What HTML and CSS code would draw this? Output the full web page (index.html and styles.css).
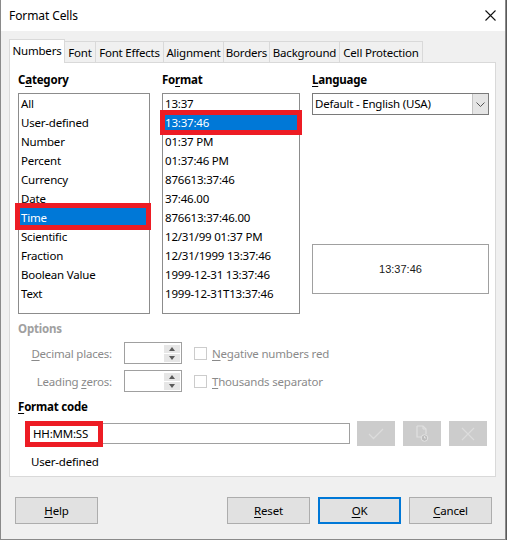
FILE: index.html
```html
<!DOCTYPE html>
<html>
<head>
<meta charset="utf-8">
<title>Format Cells</title>
<link rel="stylesheet" href="styles.css">
</head>
<body>
<div class="window">
  <div class="titlebar">
    <span class="title">Format Cells</span>
    <svg class="close" width="11" height="11" viewBox="0 0 11 11"><path d="M0.5 0.5 L10.5 10.5 M10.5 0.5 L0.5 10.5" stroke="#111" stroke-width="1.1" fill="none"/></svg>
  </div>

  <div class="tabs">
    <div class="tab active w-numbers">Numbers</div>
    <div class="tab w-font">Font</div>
    <div class="tab w-effects">Font Effects</div>
    <div class="tab w-align">Alignment</div>
    <div class="tab w-borders">Borders</div>
    <div class="tab w-bg">Background</div>
    <div class="tab w-protect">Cell Protection</div>
  </div>

  <div class="panel">
    <div class="top-grid">
      <div class="col">
        <div class="label">C<u>a</u>tegory</div>
        <div class="listbox">
          <div class="row">All</div>
          <div class="row">User-defined</div>
          <div class="row">Number</div>
          <div class="row">Percent</div>
          <div class="row">Currency</div>
          <div class="row">Date</div>
          <div class="row selected">Time</div>
          <div class="row">Scientific</div>
          <div class="row">Fraction</div>
          <div class="row">Boolean Value</div>
          <div class="row">Text</div>
          <div class="mark mark-time"></div>
        </div>
      </div>
      <div class="col">
        <div class="label">Fo<u>r</u>mat</div>
        <div class="listbox">
          <div class="row">13:37</div>
          <div class="row selected">13:37:46</div>
          <div class="row">01:37 PM</div>
          <div class="row">01:37:46 PM</div>
          <div class="row">876613:37:46</div>
          <div class="row">37:46.00</div>
          <div class="row">876613:37:46.00</div>
          <div class="row">12/31/99 01:37 PM</div>
          <div class="row">12/31/1999 13:37:46</div>
          <div class="row">1999-12-31 13:37:46</div>
          <div class="row">1999-12-31T13:37:46</div>
          <div class="mark mark-format"></div>
        </div>
      </div>
      <div class="col col-lang">
        <div class="label"><u>L</u>anguage</div>
        <div class="dropdown">
          <span class="dd-text">Default - English (USA)</span>
          <span class="dd-btn"><svg width="9" height="5" viewBox="0 0 9 5"><path d="M0.5 0.5 L4.5 4.5 L8.5 0.5" stroke="#555" stroke-width="1" fill="none"/></svg></span>
        </div>
        <div class="preview">13:37:46</div>
      </div>
    </div>

    <div class="label options-label">Options</div>
    <div class="opt-row">
      <span class="opt-label"><u>D</u>ecimal places:</span>
      <span class="spin"><span class="spin-btns"><span class="sb up"></span><span class="sb down"></span></span></span>
      <span class="check"></span>
      <span class="check-label"><u>N</u>egative numbers red</span>
    </div>
    <div class="opt-row row2">
      <span class="opt-label">Leading <u>z</u>eros:</span>
      <span class="spin"><span class="spin-btns"><span class="sb up"></span><span class="sb down"></span></span></span>
      <span class="check"></span>
      <span class="check-label"><u>T</u>housands separator</span>
    </div>

    <div class="label code-label"><u>F</u>ormat code</div>
    <div class="code-row">
      <div class="code-input">HH:MM:SS<div class="mark mark-code"></div></div>
      <span class="icon-btn">
        <svg width="16" height="12" viewBox="0 0 16 12"><path d="M1 6 L5.5 10.5 L15 1" stroke="#dcdcdc" stroke-width="1.3" fill="none"/></svg>
      </span>
      <span class="icon-btn">
        <svg width="16" height="18" viewBox="0 0 16 18"><path d="M3 1 H9 L12 4 V9 M3 1 V12 H7" stroke="#e0e0e0" stroke-width="1.2" fill="none"/><path d="M9 1 V4 H12" stroke="#e0e0e0" stroke-width="1" fill="none"/><circle cx="10.5" cy="13" r="3.3" fill="#bdbdbd" stroke="#e4e4e4" stroke-width="1"/><path d="M10.5 11.2 V13 H12" stroke="#e8e8e8" stroke-width="0.9" fill="none"/></svg>
      </span>
      <span class="icon-btn">
        <svg width="14" height="14" viewBox="0 0 14 14"><path d="M1 1 L13 13 M13 1 L1 13" stroke="#dcdcdc" stroke-width="1.2" fill="none"/></svg>
      </span>
    </div>
    <div class="user-defined">User-defined</div>
  </div>

  <div class="buttons">
    <div class="btn"><u>H</u>elp</div>
    <div class="spacer"></div>
    <div class="btn"><u>R</u>eset</div>
    <div class="btn default"><u>O</u>K</div>
    <div class="btn"><u>C</u>ancel</div>
  </div>
</div>
</body>
</html>
```

FILE: styles.css
```css
* { box-sizing: border-box; }

html, body {
  margin: 0;
  padding: 0;
  background: #5a5a5a;
}

body {
  font-family: "Noto Sans", "DejaVu Sans", sans-serif;
  font-size: 11.5px;
  letter-spacing: -0.2px;
  color: #000;
  width: 507px;
  height: 540px;
  overflow: hidden;
}

u { text-decoration: underline; text-underline-offset: 2px; text-decoration-thickness: 1px; }

.window {
  width: 506px;
  height: 540px;
  background: #f0f0f0;
  border-left: 1px solid #8a8a8a;
  border-right: 1px solid #8a8a8a;
  border-bottom: 1px solid #8a8a8a;
  display: flex;
  flex-direction: column;
}

/* Title bar */
.titlebar {
  height: 31px;
  background: #fff;
  display: flex;
  align-items: center;
  justify-content: space-between;
  padding: 0 9px 0 8px;
  flex: none;
}
.title { font-size: 12px; line-height: 16px; margin-top: 1px; letter-spacing: -0.1px; }
.close { display: block; margin-top: -1px; }

/* Tabs */
.tabs {
  margin: 8px 0 0 8px;
  height: 23px;
  display: flex;
  align-items: flex-end;
  position: relative;
  z-index: 2;
  flex: none;
}
.tab {
  height: 21px;
  border: 1px solid #d9d9d9;
  border-bottom: none;
  margin-right: -1px;
  background: #f0f0f0;
  display: flex;
  align-items: center;
  justify-content: center;
  line-height: 16px;
  white-space: nowrap;
  padding-top: 1px;
}
.tab.active {
  height: 24px;
  margin-bottom: -1px;
  background: #fff;
  padding-top: 0;
  padding-bottom: 1px;
}
.w-numbers { width: 56px; }
.w-font { width: 32px; }
.w-effects { width: 69px; }
.w-align { width: 61px; }
.w-borders { width: 47px; }
.w-bg { width: 71px; }
.w-protect { width: 84px; }

/* Panel */
.panel {
  margin-left: 8px;
  width: 487px;
  height: 415px;
  background: #fff;
  border: 1px solid #d9d9d9;
  padding: 9px 0 0 8px;
  flex: none;
}

.label {
  font-weight: bold;
  line-height: 16px;
  height: 16px;
}

.top-grid {
  display: grid;
  grid-template-columns: 132px 138px 177px;
  column-gap: 12px;
}
.col { display: flex; flex-direction: column; }
.col .label { margin-bottom: 5px; }

.listbox {
  position: relative;
  height: 221px;
  border: 1px solid #8c8c8c;
  background: #fff;
}
.row {
  height: 19px;
  line-height: 19px;
  padding-left: 2px;
  white-space: nowrap;
}
.row.selected {
  background: #0078d7;
  color: #fff;
  margin: 0 1px;
  padding-left: 1px;
}

.mark {
  position: absolute;
  border: 5px solid #ed1c24;
  pointer-events: none;
}
.mark-time { left: -4px; top: 109px; width: 136px; height: 27px; }
.mark-format { left: -3px; top: 16px; width: 142px; height: 25px; }

/* Language column */
.col-lang { height: 221px; box-sizing: content-box; }
.dropdown {
  height: 22px;
  border: 1px solid #7a7a7a;
  display: flex;
  align-items: stretch;
  background: #fff;
}
.dd-text { flex: 1; line-height: 20px; padding-left: 2px; white-space: nowrap; }
.dd-btn {
  width: 16px;
  background: #e5e5e5;
  border-left: 1px solid #c4c4c4;
  display: flex;
  align-items: center;
  justify-content: center;
}
.dd-btn svg { display: block; }
.preview {
  margin-top: auto;
  height: 50px;
  border: 1px solid #a0a0a0;
  display: flex;
  align-items: center;
  justify-content: center;
  font-family: "Liberation Sans", Arial, sans-serif;
  font-size: 11px;
  letter-spacing: 0;
  color: #1a1a1a;
  margin-bottom: -1px;
}
.col-lang { padding-bottom: 1px; }

/* Options */
.options-label { color: #a0a0a0; margin-top: 7px; }
.opt-row {
  display: flex;
  align-items: center;
  height: 22px;
  margin-top: 5px;
  color: #8a8a8a;
}
.opt-row.row2 { margin-top: 6px; }
.opt-label { width: 94px; text-align: right; margin-right: 12px; white-space: nowrap; }
.spin {
  width: 58px;
  height: 22px;
  border: 1px solid #a0a0a0;
  background: #fff;
  display: flex;
  justify-content: flex-end;
  align-items: center;
  padding-right: 1px;
}
.spin-btns { display: flex; flex-direction: column; gap: 1px; }
.sb {
  width: 16px;
  height: 8px;
  background: #e6e6e6;
  position: relative;
}
.sb::after {
  content: "";
  position: absolute;
  left: 5px;
  width: 0;
  height: 0;
  border-left: 3px solid transparent;
  border-right: 3px solid transparent;
}
.sb.up::after { top: 2px; border-bottom: 4px solid #5a5a5a; }
.sb.down::after { top: 2px; border-top: 4px solid #5a5a5a; }
.check {
  width: 13px;
  height: 13px;
  border: 1px solid #cccccc;
  margin-left: 12px;
  margin-right: 5px;
  background: #fff;
}
.check-label { white-space: nowrap; }

/* Format code */
.code-label { margin-top: 7px; }
.code-row {
  display: flex;
  align-items: center;
  height: 25px;
  margin-top: 6px;
  margin-left: 11px;
}
.code-input {
  position: relative;
  width: 322px;
  height: 21px;
  border: 1px solid #a0a0a0;
  line-height: 19px;
  padding-left: 3px;
  margin-right: 7px;
}
.mark-code { left: -5px; top: -3px; width: 78px; height: 26px; }
.icon-btn {
  width: 38px;
  height: 25px;
  background: #cccccc;
  margin-right: 8px;
  display: flex;
  align-items: center;
  justify-content: center;
}
.icon-btn svg { display: block; }

.user-defined {
  margin: 8px 0 0 13px;
  line-height: 16px;
}

/* Buttons */
.buttons {
  display: flex;
  gap: 8px;
  margin: 20px 13px 0 14px;
  flex: none;
}
.spacer { flex: 1; }
.btn {
  width: 83px;
  height: 27px;
  background: #e1e1e1;
  border: 1px solid #adadad;
  display: flex;
  align-items: center;
  justify-content: center;
  line-height: 16px;
}
.btn.default { border: 2px solid #0078d7; }
```
